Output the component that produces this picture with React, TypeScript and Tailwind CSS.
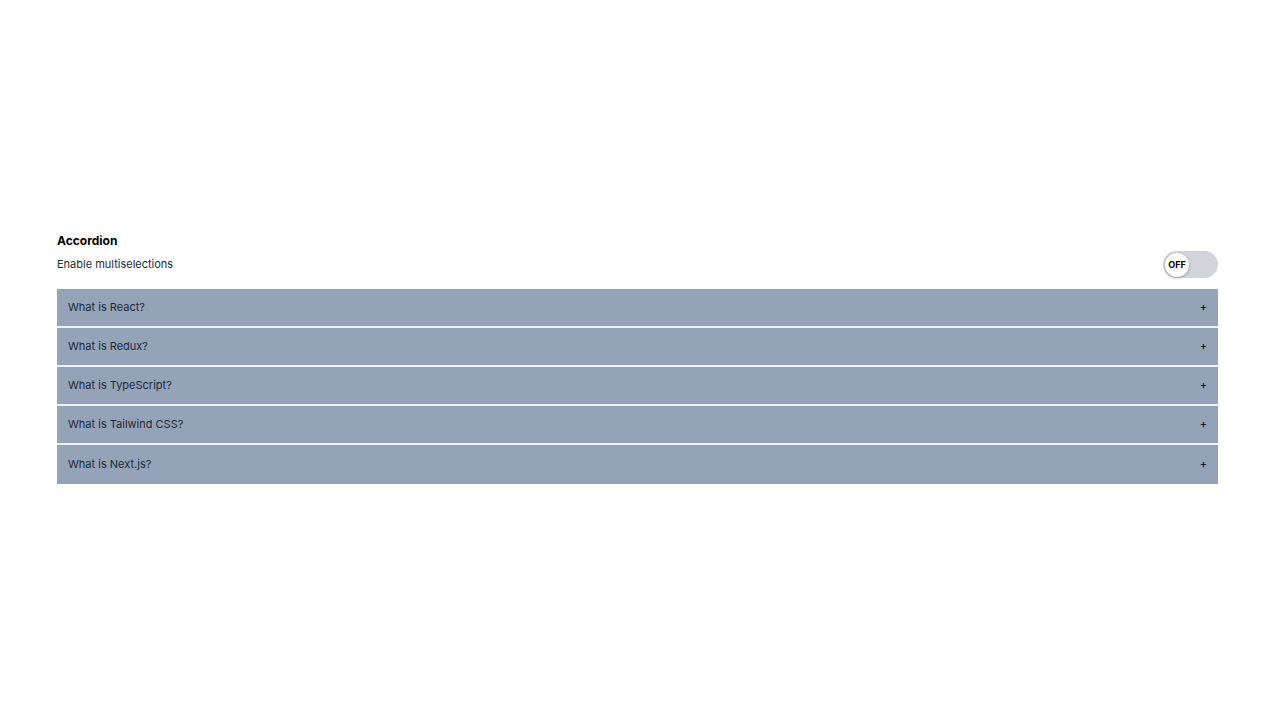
import React, { useState } from "react";

const items = [
  "What is React?",
  "What is Redux?",
  "What is TypeScript?",
  "What is Tailwind CSS?",
  "What is Next.js?",
];

export default function App() {
  const [multi, setMulti] = useState(false);
  const [open, setOpen] = useState<number[]>([]);
  return (
    <div
      className="w-full h-screen bg-white flex flex-col justify-center pb-[3px]"
      style={{ fontFamily: "Inter, 'Noto Sans', sans-serif" }}
    >
      <div className="ml-[57px] w-[1161px] flex flex-col">
        <h2 className="text-[12px] leading-[16px] font-bold text-black">Accordion</h2>
        <div className="flex items-center justify-between mt-[2px]">
          <span className="text-[11px] text-[#1f2937]">Enable multiselections</span>
          <button
            onClick={() => setMulti(!multi)}
            className="relative w-[55px] h-[27px] rounded-full bg-[#d1d5db] flex items-center px-[2px]"
          >
            <span className="w-[24px] h-[24px] rounded-full bg-white shadow-[0_1px_3px_rgba(0,0,0,0.3)] flex items-center justify-center text-[9px] font-bold text-black">
              OFF
            </span>
          </button>
        </div>
        <div className="flex flex-col mt-[11px]">
          {items.map((q, i) => (
            <div
              key={q}
              className="h-[39px] bg-[#94a3b8] border-b-2 border-[#eef1f5] last:border-b-0 flex items-center justify-between pl-[11px] pr-[11px] cursor-pointer"
              onClick={() =>
                setOpen(open.includes(i) ? open.filter((x) => x !== i) : multi ? [...open, i] : [i])
              }
            >
              <span className="text-[11px] text-[#1f2937]">{q}</span>
              <span className="text-[11px] text-black">+</span>
            </div>
          ))}
        </div>
      </div>
    </div>
  );
}
